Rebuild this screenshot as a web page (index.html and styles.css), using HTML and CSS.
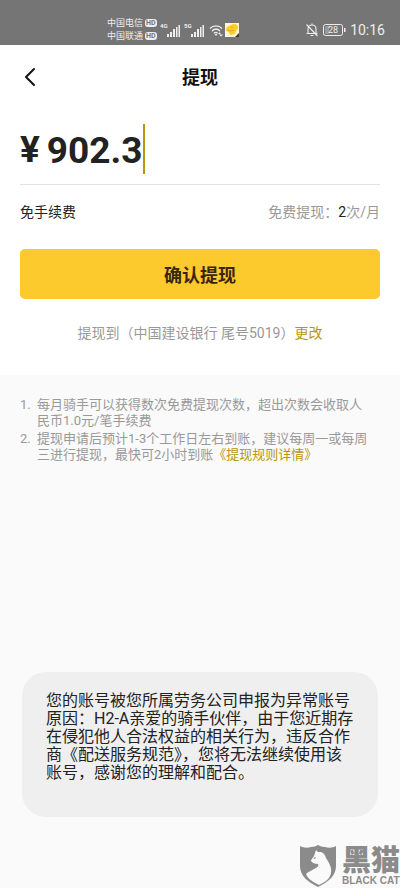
FILE: index.html
```html
<!DOCTYPE html>
<html lang="zh-CN">
<head>
<meta charset="utf-8">
<meta name="viewport" content="width=device-width, initial-scale=1">
<title>提现</title>
<link rel="stylesheet" href="styles.css">
</head>
<body>
<div class="status">
  <div class="carriers">
    <div class="carrier">中国电信<span class="hd">HD</span></div>
    <div class="carrier">中国联通<span class="hd">HD</span></div>
  </div>
  <svg class="signal" width="21" height="16" viewBox="0 0 21 16" aria-hidden="true">
    <text x="0" y="6">4G</text>
    <path d="M7 12h2v3H7zM10 10h2v5h-2zM13 7h2v8h-2zM16 5h1.500v10H16zM18.500 3h1.500v12h-1.500z"/>
  </svg>
  <svg class="signal" width="21" height="16" viewBox="0 0 21 16" aria-hidden="true">
    <text x="0" y="6">5G</text>
    <path d="M7 12h2v3H7zM10 10h2v5h-2zM13 7h2v8h-2zM16 5h1.500v10H16zM18.500 3h1.500v12h-1.500z"/>
  </svg>
  <svg class="wifi" width="14" height="14" viewBox="0 0 14 14" aria-hidden="true">
    <path d="M1 5.500C4.500 2 9.500 2 13 5.500M3 8c2.400-2.300 5.600-2.300 8 0M5 10.200c1.200-1 2.600-1 3.600 0" fill="none" stroke="#eee" stroke-width="1.400"/>
    <path d="M5.500 11l1.500 2 1.500-2zM9 11l1.500-1.800L12 11zM10 11.500h4l-2 2z" fill="#eee"/>
  </svg>
  <svg class="app" width="14" height="14" viewBox="0 0 14 14" aria-hidden="true">
    <path d="M0 0h14v14H0z" fill="#fff6da"/>
    <path d="M1 6c1-3 3-3 5-4 3-2 7-1 7 2 0 2-1 3-2 4l-1 3-5 1-1-3-3-1z" fill="#f9cd2c"/>
    <path d="M3 7l3 1 3-1M6 4l2 1" fill="none" stroke="#dba01c" stroke-width=".8"/>
    <path d="M14 10v4h-4z" fill="#3f3a30"/>
  </svg>
  <div class="right">
    <svg width="14" height="14" viewBox="0 0 14 14" fill="none" stroke="#eee" stroke-width="1.100" aria-hidden="true">
      <path d="M3 10V6c0-2.400 1.500-4 4-4s4 1.600 4 4v4M1.500 10.500h11M5.500 12.500h3M7 .500V2M1.500 1.500l11 11.500"/>
    </svg>
    <svg class="battery" width="23" height="12" viewBox="0 0 23 12" aria-hidden="true">
      <rect x=".5" y=".5" width="19" height="11" rx="2" fill="none" stroke="#eee"/>
      <path d="M2 2h4v8H2z" fill="#999"/>
      <path d="M21 4h1.500v4H21z" fill="#eee"/>
      <text x="10" y="9" text-anchor="middle">28</text>
    </svg>
    <span class="time">10:16</span>
  </div>
</div>

<header class="header">
  <button class="back" type="button" aria-label="返回">
    <svg width="12" height="20" viewBox="0 0 12 20" aria-hidden="true"><path d="M10 2L2 10l8 8" fill="none" stroke="#111" stroke-width="2" stroke-linecap="round" stroke-linejoin="round"/></svg>
  </button>
  <h1>提现</h1>
</header>

<main>
  <form class="form">
    <div class="amount">
      <label for="amount">¥</label>
      <input id="amount" type="text" inputmode="decimal" value="902.3">
      <span class="caret"></span>
    </div>
    <div class="fee">
      <span>免手续费</span>
      <span class="muted">免费提现：<span class="count">2</span>次/月</span>
    </div>
    <button class="submit" type="button">确认提现</button>
    <p class="account">提现到（中国建设银行 尾号5019）<a href="#change">更改</a></p>
  </form>
  <ol class="rules">
    <li>每月骑手可以获得数次免费提现次数，超出次数会收取人民币1.0元/笔手续费</li>
    <li>提现申请后预计1-3个工作日左右到账，建议每周一或每周三进行提现，最快可2小时到账<a href="#rules">《提现规则详情》</a></li>
  </ol>
</main>

<div class="toast" role="alert">您的账号被您所属劳务公司申报为异常账号<br>原因：H2-A亲爱的骑手伙伴，由于您近期存在侵犯他人合法权益的相关行为，违反合作商《配送服务规范》，您将无法继续使用该账号，感谢您的理解和配合。</div>

<div class="watermark">
  <svg width="36" height="42" viewBox="0 0 36 42" aria-hidden="true">
    <path d="M0 1c3 2 8 2 11 1 3 0 5-1 7-2 2 1 4 2 7 2 3 1 8 1 11-1v20c0 10-8 16-18 21C8 37 0 31 0 21z" fill="#8b8b8b"/>
    <path d="M16 5l2 2 3 0c3 1 4 3 5 6 3 5 6 9 5 15-1 6-6 9-12 12-6-3-11-6-13-11 3-3 7-4 10-6 2-1 3-3 2-4-3 0-6-1-7-3 0-2 2-3 3-5z" fill="#fafafa"/>
    <path d="M13 13l3-1-1 2z" fill="#8b8b8b"/>
  </svg>
  <div class="brand">
    <span class="brand-name">黑猫</span>
    <span class="brand-sub">BLACK CAT</span>
  </div>
</div>
</body>
</html>
```
FILE: styles.css
```css
* {
  box-sizing: border-box;
}

body {
  margin: 0;
  min-height: 100vh;
  display: flex;
  flex-direction: column;
  position: relative;
  background: #fff;
  color: #222;
  font-family: Roboto, "Noto Sans CJK SC", sans-serif;
  font-size: 14px;
}

button,
input {
  font-family: inherit;
  border: 0;
  padding: 0;
}

a {
  color: #b8960f;
  text-decoration: none;
}

.status {
  height: 45px;
  padding: 14px 15px 0 107px;
  display: flex;
  align-items: center;
  background: #757575;
  color: #eee;
}

.carrier {
  display: flex;
  align-items: center;
  gap: 2px;
  font-size: 9px;
  line-height: 13px;
  white-space: nowrap;
}

.hd {
  padding: 0 1px;
  border-radius: 3px;
  background: #eee;
  color: #757575;
  font-size: 7px;
  font-weight: 700;
  line-height: 8px;
}

.signal {
  margin-left: 3px;
  fill: #eee;
}

.signal text {
  font-size: 6px;
  font-weight: 700;
}

.wifi {
  margin-left: 4px;
}

.app {
  margin-left: 2px;
}

.right {
  margin-left: auto;
  display: flex;
  align-items: center;
  gap: 4px;
}

.battery text {
  fill: #eee;
  font-size: 9px;
}

.time {
  font-size: 14px;
}

.header {
  height: 64px;
  display: grid;
  grid-template-columns: 60px 1fr 60px;
  align-items: center;
}

.back {
  height: 40px;
  padding-left: 24px;
  display: flex;
  align-items: center;
  background: none;
}

h1 {
  margin: 0;
  padding-top: 2px;
  color: #111;
  font-size: 18px;
  line-height: 24px;
  text-align: center;
}

main {
  flex: 1;
  display: flex;
  flex-direction: column;
}

.form {
  padding: 15px 20px 31px;
}

.amount {
  display: flex;
  align-items: center;
  padding-bottom: 10px;
  border-bottom: 1px solid #e2e2e2;
  font-size: 37px;
  font-weight: 700;
  line-height: 50px;
}

.amount label {
  padding-top: 2px;
  line-height: 48px;
}

.amount input {
  field-sizing: content;
  margin-left: 7px;
  padding-top: 2px;
  height: 50px;
  background: none;
  color: inherit;
  font-size: 37px;
  font-weight: 700;
  outline: 0;
}

.caret {
  width: 2px;
  height: 50px;
  background: #b8960f;
}

.fee {
  display: flex;
  justify-content: space-between;
  padding: 16px 0 26px;
  line-height: 22px;
}

.muted {
  color: #999;
}

.count {
  color: #222;
}

.submit {
  display: block;
  width: 100%;
  height: 50px;
  border-radius: 5px;
  background: #fdca2e;
  color: #3a2610;
  font-size: 18px;
  font-weight: 700;
}

.account {
  margin: 0;
  padding-top: 23px;
  color: #999;
  line-height: 22px;
  text-align: center;
}

.rules {
  flex: 1;
  margin: 0;
  padding: 22px 26px 0 37px;
  background: #fafafa;
  color: #999;
  font-size: 13px;
  line-height: 16px;
  list-style: none;
  counter-reset: rule;
}

.rules li {
  margin-bottom: 2px;
  counter-increment: rule;
}

.rules li::before {
  content: counter(rule) ".";
  float: left;
  margin-left: -17px;
}

.toast {
  position: absolute;
  right: 22px;
  bottom: 71px;
  left: 22px;
  padding: 20px 22px 35px 24px;
  border-radius: 24px;
  background: #efefef;
  color: #222;
  font-size: 16px;
  line-height: 18px;
}

.watermark {
  position: absolute;
  right: 0;
  bottom: 1px;
  display: flex;
  align-items: center;
  gap: 6px;
  color: #8b8b8b;
}

.brand {
  display: flex;
  flex-direction: column;
}

.brand-name {
  font-size: 29px;
  font-weight: 900;
  line-height: 30px;
}

.brand-sub {
  font-family: "Liberation Sans", sans-serif;
  font-size: 10px;
  font-weight: 700;
  line-height: 10px;
}
```
